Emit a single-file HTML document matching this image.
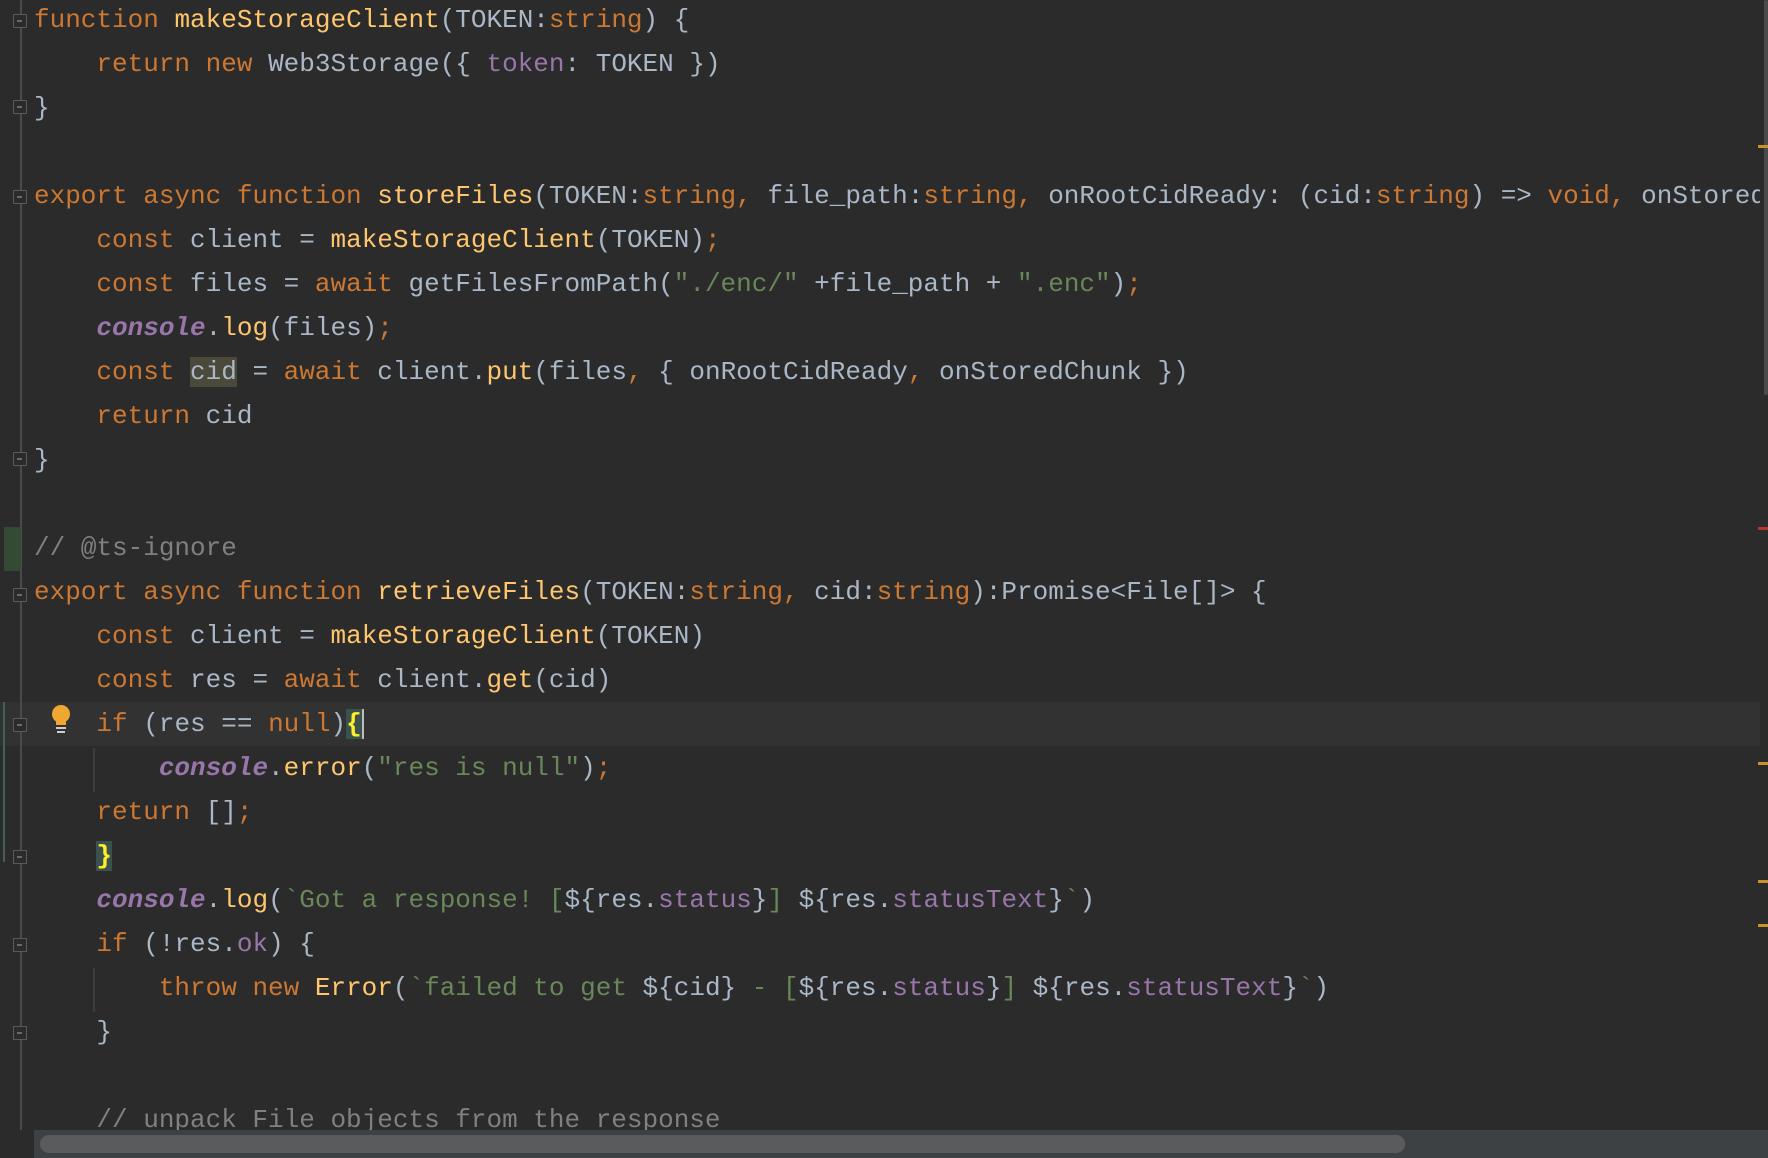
<!DOCTYPE html>
<html><head><meta charset="utf-8"><style>
html,body{margin:0;padding:0;}
body{width:1768px;height:1158px;background:#2b2b2b;position:relative;overflow:hidden;font-family:"Liberation Mono",monospace;font-size:26px;color:#a9b7c6;}
.l{position:absolute;left:34px;height:44px;line-height:44px;white-space:pre;}
.k{color:#cc7832}.f{color:#ffc66d}.p{color:#9876aa}.s{color:#6a8759}.c{color:#808080}
.i{color:#9876aa;font-style:italic;font-weight:bold}
.y{color:#ffef28;font-weight:bold;background:#3b514d}
.m{position:absolute;left:1758px;width:10px;height:3px;background:#c9922a}
.fold{position:absolute;left:13px;width:14px;height:14px;border:1.5px solid #5a5a5a;box-sizing:border-box;background:#2b2b2b}
.fold:after{content:"";position:absolute;left:3px;top:5px;width:5px;height:1.5px;background:#6a6a6a}
</style></head><body>
<div style="position:absolute;left:0;top:702px;width:1768px;height:44px;background:#323232"></div>
<div style="position:absolute;left:20px;top:0;width:2px;height:1130px;background:#4a4a4a"></div>
<div style="position:absolute;left:4px;top:527px;width:17px;height:44px;background:#344a34"></div>
<div style="position:absolute;left:3px;top:702px;width:2px;height:160px;background:#44605a"></div>
<div style="position:absolute;left:93px;top:748px;width:2px;height:44px;background:#3c3c3c"></div>
<div style="position:absolute;left:93px;top:968px;width:2px;height:44px;background:#3c3c3c"></div>
<div class="fold" style="top:14px"></div><div class="fold" style="top:100px"></div>
<div class="fold" style="top:190px"></div><div class="fold" style="top:452px"></div>
<div class="fold" style="top:588px"></div><div class="fold" style="top:718px"></div>
<div class="fold" style="top:850px"></div><div class="fold" style="top:938px"></div>
<div class="fold" style="top:1026px"></div>
<div style="position:absolute;left:52px;top:705px;width:18px;height:18px;border-radius:50%;background:#f0a732"></div>
<div style="position:absolute;left:56px;top:719px;width:10px;height:6px;background:#f0a732"></div>
<div style="position:absolute;left:56px;top:727px;width:10px;height:2px;background:#ccc"></div>
<div style="position:absolute;left:57px;top:731px;width:8px;height:2px;background:#ccc"></div>
<div class="l" style="top:-2px"><span class="k">function </span><span class="f">makeStorageClient</span>(TOKEN:<span class="k">string</span>) {</div>
<div class="l" style="top:42px">    <span class="k">return new </span>Web3Storage({ <span class="p">token</span>: TOKEN })</div>
<div class="l" style="top:86px">}</div>
<div class="l" style="top:174px"><span class="k">export async function </span><span class="f">storeFiles</span>(TOKEN:<span class="k">string, </span>file_path:<span class="k">string, </span>onRootCidReady: (cid:<span class="k">string</span>) =&gt; <span class="k">void, </span>onStoredChunk</div>
<div class="l" style="top:218px">    <span class="k">const </span>client = <span class="f">makeStorageClient</span>(TOKEN)<span class="k">;</span></div>
<div class="l" style="top:262px">    <span class="k">const </span>files = <span class="k">await </span>getFilesFromPath(<span class="s">"./enc/"</span> +file_path + <span class="s">".enc"</span>)<span class="k">;</span></div>
<div class="l" style="top:306px">    <span class="i">console</span>.<span class="f">log</span>(files)<span class="k">;</span></div>
<div class="l" style="top:350px">    <span class="k">const </span><span style="background:#4b4a3a">cid</span> = <span class="k">await </span>client.<span class="f">put</span>(files<span class="k">, </span>{ onRootCidReady<span class="k">, </span>onStoredChunk })</div>
<div class="l" style="top:394px">    <span class="k">return </span>cid</div>
<div class="l" style="top:438px">}</div>
<div class="l c" style="top:526px">// @ts-ignore</div>
<div class="l" style="top:570px"><span class="k">export async function </span><span class="f">retrieveFiles</span>(TOKEN:<span class="k">string, </span>cid:<span class="k">string</span>):Promise&lt;File[]&gt; {</div>
<div class="l" style="top:614px">    <span class="k">const </span>client = <span class="f">makeStorageClient</span>(TOKEN)</div>
<div class="l" style="top:658px">    <span class="k">const </span>res = <span class="k">await </span>client.<span class="f">get</span>(cid)</div>
<div class="l" style="top:702px">    <span class="k">if </span>(res == <span class="k">null</span>)<span class="y">{</span><span style="border-left:2px solid #bbb"></span></div>
<div class="l" style="top:746px">        <span class="i">console</span>.<span class="f">error</span>(<span class="s">"res is null"</span>)<span class="k">;</span></div>
<div class="l" style="top:790px">    <span class="k">return </span>[]<span class="k">;</span></div>
<div class="l" style="top:834px">    <span class="y">}</span></div>
<div class="l" style="top:878px">    <span class="i">console</span>.<span class="f">log</span>(<span class="s">`Got a response! [</span>${res.<span class="p">status</span>}<span class="s">] </span>${res.<span class="p">statusText</span>}<span class="s">`</span>)</div>
<div class="l" style="top:922px">    <span class="k">if </span>(!res.<span class="p">ok</span>) {</div>
<div class="l" style="top:966px">        <span class="k">throw new </span><span class="f">Error</span>(<span class="s">`failed to get </span>${cid}<span class="s"> - [</span>${res.<span class="p">status</span>}<span class="s">] </span>${res.<span class="p">statusText</span>}<span class="s">`</span>)</div>
<div class="l" style="top:1010px">    }</div>
<div class="l c" style="top:1098px">    // unpack File objects from the response</div>
<div style="position:absolute;left:1760px;top:0;width:8px;height:1130px;background:#2b2b2b"></div>
<div style="position:absolute;left:1764px;top:0;width:4px;height:395px;background:#4a4a4a;border-radius:2px"></div>
<div class="m" style="top:145px"></div>
<div class="m" style="top:527px;background:#b83232"></div>
<div class="m" style="top:762px"></div>
<div class="m" style="top:880px"></div>
<div class="m" style="top:924px"></div>
<div style="position:absolute;left:34px;top:1130px;width:1734px;height:28px;background:#3e4144"></div>
<div style="position:absolute;left:40px;top:1135px;width:1365px;height:18px;background:#5a5b5c;border-radius:9px"></div>
</body></html>
